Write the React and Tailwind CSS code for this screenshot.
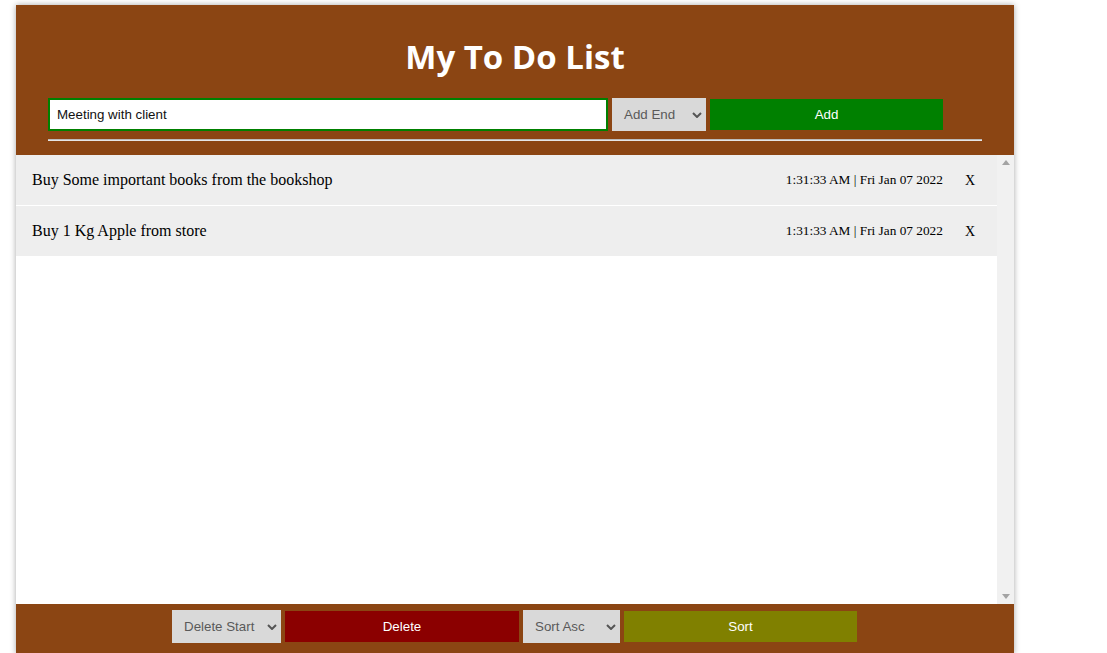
import React from "react";

const Chevron = () => (
  <svg width="10" height="6" viewBox="0 0 10 6" className="shrink-0">
    <path d="M1 1 L5 5 L9 1" fill="none" stroke="#555" strokeWidth="2" />
  </svg>
);

const Select = ({ label, w }) => (
  <div
    className={`flex items-center justify-between h-[33px] bg-[#d9d9d9] pl-[12px] pr-[4px] text-[13.33px] text-[#595959] ${w}`}
    style={{ fontFamily: '"Liberation Sans", Arial, sans-serif' }}
  >
    <span>{label}</span>
    <Chevron />
  </div>
);

const items = [
  "Buy Some important books from the bookshop",
  "Buy 1 Kg Apple from store",
];

export default function App() {
  return (
    <div className="bg-white min-h-screen pt-[5px]">
      <div className="ml-[16px] w-[998px] shadow-[0_0_6px_rgba(0,0,0,0.35)] bg-white">
        {/* Header */}
        <div className="h-[150px] bg-[#8B4513] px-[32px] flex flex-col">
          <h1
            className="text-white text-[33px] font-bold text-center leading-[37px] mt-[33px]"
            style={{ fontFamily: '"Comic Sans MS", "Open Sans", sans-serif' }}
          >
            My To Do List
          </h1>
          <div className="flex items-center gap-[4px] mt-[23px]">
            <div
              className="w-[560px] h-[33px] bg-white border-2 border-[#008000] flex items-center pl-[7px] text-[13.33px] text-[#111]"
              style={{ fontFamily: '"Liberation Sans", Arial, sans-serif' }}
            >
              Meeting with client
            </div>
            <Select label="Add End" w="w-[94px]" />
            <div
              className="w-[233px] h-[31px] bg-[#008000] text-white text-[13.33px] flex items-center justify-center"
              style={{ fontFamily: '"Liberation Sans", Arial, sans-serif' }}
            >
              Add
            </div>
          </div>
          <div className="mt-[8px] h-[2px] bg-[#e6e6e6] border-t border-[#bbbbbb]" />
        </div>

        {/* List */}
        <div className="flex h-[449px]">
          <div className="flex-1 flex flex-col">
            {items.map((t, i) => (
              <div
                key={i}
                className="h-[51px] bg-[#eeeeee] border-b border-white flex items-center pl-[16px] pr-[22px] text-black"
                style={{ fontFamily: '"Liberation Serif", "Times New Roman", serif' }}
              >
                <span className="flex-1 text-[16px]">{t}</span>
                <span className="text-[13.3px]">1:31:33 AM | Fri Jan 07 2022</span>
                <span className="text-[14px] ml-[22px]">X</span>
              </div>
            ))}
          </div>
          <div className="w-[17px] bg-[#f1f1f1] flex flex-col justify-between items-center py-[5px]">
            <svg width="8" height="5" viewBox="0 0 8 5">
              <path d="M0 5 L4 0 L8 5 Z" fill="#a3a3a3" />
            </svg>
            <svg width="8" height="5" viewBox="0 0 8 5">
              <path d="M0 0 L4 5 L8 0 Z" fill="#a3a3a3" />
            </svg>
          </div>
        </div>

        {/* Footer */}
        <div className="h-[50px] bg-[#8B4513] flex justify-start items-start pt-[6px] pl-[156px] gap-[4px]">
          <Select label="Delete Start" w="w-[109px]" />
          <div
            className="w-[234px] h-[31px] mt-[1px] bg-[#8B0000] text-white text-[13.33px] flex items-center justify-center"
            style={{ fontFamily: '"Liberation Sans", Arial, sans-serif' }}
          >
            Delete
          </div>
          <Select label="Sort Asc" w="w-[97px]" />
          <div
            className="w-[233px] h-[31px] mt-[1px] bg-[#808000] text-white text-[13.33px] flex items-center justify-center"
            style={{ fontFamily: '"Liberation Sans", Arial, sans-serif' }}
          >
            Sort
          </div>
        </div>
      </div>
    </div>
  );
}
